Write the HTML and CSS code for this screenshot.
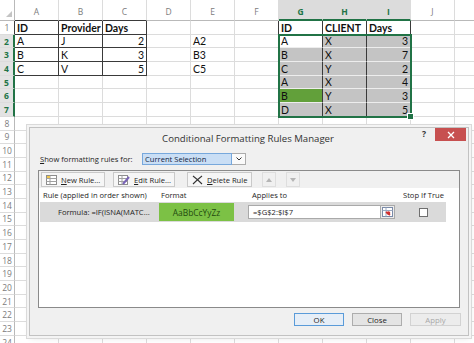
FILE: index.html
```html
<!DOCTYPE html>
<html>
  <head>
    <title>Conditional Formatting Rules Manager</title>
    <meta name="viewport" content="width=device-width">
    <link rel="stylesheet" href="styles.css">
  </head>
  <body>
    <div id="sheet" class="sheet">
      <div class="selbox"></div>
    </div>

    <div class="dlg">
      <div class="titlebar">
        <div class="title">Conditional Formatting Rules Manager</div>
        <div class="help">?</div>
        <div class="xbtn">
          <svg width="8" height="8" viewBox="0 0 8 8"><path d="M1 1L7 7M7 1L1 7" stroke="#fff" stroke-width="1.3"/></svg>
        </div>
      </div>

      <div class="showrow">
        <span class="lbl"><u>S</u>how formatting rules for:</span>
        <div class="combo">
          <span class="combo-val">Current Selection</span>
          <span class="combo-btn">
            <svg width="6" height="4" viewBox="0 0 6 4"><path d="M0.5 0.5L3 3L5.5 0.5" fill="none" stroke="#333" stroke-width="1"/></svg>
          </span>
        </div>
      </div>

      <div class="panel">
        <div class="toolbar">
          <div class="tbtn w-new">
            <svg width="11" height="10" viewBox="0 0 11 10">
              <rect x="0.5" y="0.5" width="10" height="9" fill="#fff" stroke="#8d8d8d"/>
              <path d="M0.5 3.5h10M0.5 6.5h10M4 0.5v9" stroke="#a0a0a0"/>
              <rect x="1" y="1" width="3" height="2" fill="#f0c850"/>
            </svg>
            <span><u>N</u>ew Rule...</span>
          </div>
          <div class="tbtn w-edit">
            <svg width="12" height="10" viewBox="0 0 12 10">
              <rect x="0.5" y="0.5" width="9" height="9" fill="#fff" stroke="#8d8d8d"/>
              <path d="M0.5 3.5h9M0.5 6.5h9M4 0.5v9" stroke="#a0a0a0"/>
              <path d="M5 9L11 2" stroke="#7a64b8" stroke-width="2"/>
            </svg>
            <span><u>E</u>dit Rule...</span>
          </div>
          <div class="tbtn w-del">
            <svg width="11" height="10" viewBox="0 0 11 10"><path d="M1 1Q5 4 10 9M10 1Q6 4 1 9" fill="none" stroke="#333" stroke-width="1.1"/></svg>
            <span><u>D</u>elete Rule</span>
          </div>
          <div class="tbtn w-arr">
            <svg width="6" height="4" viewBox="0 0 6 4"><path d="M0 4L3 0L6 4Z" fill="#b5b5b5"/></svg>
          </div>
          <div class="tbtn w-arr">
            <svg width="6" height="4" viewBox="0 0 6 4"><path d="M0 0L3 4L6 0Z" fill="#b5b5b5"/></svg>
          </div>
        </div>

        <div class="list">
          <div class="lhead">
            <span>Rule (applied in order shown)</span>
            <span>Format</span>
            <span class="ap">Applies to</span>
            <span class="st">Stop If True</span>
          </div>
          <div class="lrow">
            <span class="rule">Formula: =IF(ISNA(MATC...</span>
            <span class="fmt">AaBbCcYyZz</span>
            <span class="applies">
              <span class="inp">=$G$2:$I$7</span>
              <span class="pick">
                <svg width="11" height="10" viewBox="0 0 11 10">
                  <rect x="0.5" y="0.5" width="10" height="9" fill="#fff" stroke="#7a8aa8"/>
                  <path d="M0.5 3.5h10M4 0.5v9" stroke="#9aa8c0"/>
                  <path d="M4 5L8 8" stroke="#d03030" stroke-width="1.6"/>
                  <circle cx="6.5" cy="6" r="1.8" fill="#d03030"/>
                </svg>
              </span>
            </span>
            <span class="stop"><span class="chk"></span></span>
          </div>
        </div>
      </div>

      <div class="footer">
        <div class="fbtn ok">OK</div>
        <div class="fbtn">Close</div>
        <div class="fbtn off">Apply</div>
      </div>
    </div>

    <script src="script.js"></script>
  </body>
</html>
```

FILE: script.js
```js
// K is only partly in view, its letter falls outside the window
let cols = "ABCDEFGHIJ".split("").concat([""]);
let data = {
  A1: "ID", B1: "Provider", C1: "Days",
  A2: "A", B2: "J", C2: 2,
  A3: "B", B3: "K", C3: 3,
  A4: "C", B4: "V", C4: 5,
  E2: "A2", E3: "B3", E4: "C5",
  G1: "ID", H1: "CLIENT", I1: "Days",
  G2: "A", H2: "X", I2: 3,
  G3: "B", H3: "X", I3: 7,
  G4: "C", H4: "Y", I4: 2,
  G5: "A", H5: "X", I5: 4,
  G6: "B", H6: "Y", I6: 3,
  G7: "D", H7: "X", I7: 5
};
// bordered tables: [col from, row from, col to, row to]
let boxes = [[0, 1, 2, 4], [6, 1, 8, 7]];

let inBox = (c, r) => boxes.some(b => c >= b[0] && c <= b[2] && r >= b[1] && r <= b[3]);
let inSel = (c, r) => c >= 6 && c <= 8 && r >= 2 && r <= 7;

let sheet = document.getElementById("sheet");

for (let r = 0; r <= 24; r++) {
  for (let c = -1; c < cols.length; c++) {
    let el = document.createElement("div");
    el.style.gridArea = `${r + 1} / ${c + 2}`;
    if (r == 0 && c == -1) {
      el.className = "corner";
    } else if (r == 0) {
      el.className = "ch" + (c >= 6 && c <= 8 ? " on" : "") + (inBox(c, 1) ? " db" : "");
      el.textContent = cols[c];
    } else if (c == -1) {
      el.className = "rh" + (r >= 2 && r <= 7 ? " on" : "") + (inBox(0, r) ? " dr" : "");
      el.textContent = r;
    } else {
      let key = cols[c] + r;
      let val = data[key];
      let cls = ["c"];
      if (inBox(c, r) || inBox(c + 1, r)) cls.push("dr");
      if (inSel(c, r) && r < 7) cls.push("lb");
      else if (inBox(c, r) || inBox(c, r + 1)) cls.push("db");
      if (r == 1 && inBox(c, r)) cls.push("b");
      if (typeof val == "number") cls.push("num");
      if (key == "G6") cls.push("cf");
      else if (inSel(c, r) && key != "G2") cls.push("sel");
      el.className = cls.join(" ");
      if (val !== undefined) el.textContent = val;
    }
    sheet.appendChild(el);
  }
}
```

FILE: styles.css
```css
* { box-sizing: border-box; }
body {
  margin: 0;
  width: 474px;
  height: 343px;
  overflow: hidden;
  position: relative;
  background: #fff;
  font-family: Lato, "Liberation Sans", sans-serif;
}

/* spreadsheet */
.sheet {
  display: grid;
  grid-template-columns: 15px repeat(11, 44px);
  grid-template-rows: 21px repeat(24, 13.7px);
}

.c, .ch, .rh, .corner {
  border-right: 1px solid #dcdcdc;
  border-bottom: 1px solid #dcdcdc;
  white-space: nowrap;
  overflow: hidden;
  display: flex;
}

.c {
  font-size: 10.5px;
  line-height: 12px;
  padding: 0 2px;
  align-items: flex-end;
  color: #111;
}
.c.num { justify-content: flex-end; }
.c.b { font-weight: bold; }
.c.sel { background: #c4c4c4; }
.c.cf { background: #62a03a; }

.dr { border-right-color: #3a3a3a; }
.db { border-bottom-color: #3a3a3a; }
.lb { border-bottom-color: #ededed; }

.ch, .rh {
  font-family: "Open Sans", sans-serif;
  font-size: 8.5px;
  color: #7c7c7c;
  justify-content: center;
  align-items: center;
}
.ch { border-bottom-color: #b9b9b9; padding-top: 3px; }
.rh { border-right-color: #b9b9b9; }
.ch.db { border-bottom-color: #3a3a3a; }
.rh.dr { border-right-color: #3a3a3a; }

.ch.on {
  background: #dcdcdc;
  color: #217346;
  font-weight: bold;
  border-bottom: 2px solid #217346;
}
.rh.on {
  background: #e3e3e3;
  color: #217346;
  font-weight: bold;
  border-right: 2px solid #217346;
}

.corner {
  border-bottom-color: #b9b9b9;
  border-right-color: #b9b9b9;
  align-items: flex-end;
  justify-content: flex-end;
  padding: 0 2px 3px 0;
}
.corner::after {
  content: "";
  border-left: 6px solid transparent;
  border-bottom: 6px solid #c4c4c4;
}

.selbox {
  grid-area: 3 / 8 / 9 / 11;
  margin: -1px;
  border: 2px solid #217346;
  position: relative;
  z-index: 2;
  pointer-events: none;
}
.selbox::after {
  content: "";
  position: absolute;
  right: -4px;
  bottom: -4px;
  width: 5px;
  height: 5px;
  background: #217346;
  border: 1px solid #fff;
}

/* dialog */
.dlg {
  position: absolute;
  left: 29px;
  top: 127px;
  width: 440px;
  height: 209px;
  z-index: 5;
  background: #f0f0f0;
  border: 1px solid #c2c2c2;
  box-shadow: 0 0 0 2px #f4f4f4, 0 0 0 3px #dadada, 1px 2px 6px rgba(0,0,0,.12);
  font-family: "Open Sans", sans-serif;
  font-size: 7.6px;
  color: #1e1e1e;
  display: flex;
  flex-direction: column;
}

.titlebar {
  height: 22px;
  display: flex;
  align-items: flex-start;
  padding-right: 2px;
}
.title {
  flex: 1;
  text-align: center;
  font-size: 9.6px;
  color: #333;
  line-height: 22px;
  padding-left: 44px;
}
.help {
  flex: none;
  width: 12px;
  font-weight: bold;
  font-size: 8.5px;
  color: #333;
  line-height: 12px;
  margin-right: 1px;
}
.xbtn {
  flex: 0 0 31px;
  min-width: 31px;
  height: 13px;
  background: #c75050;
  display: flex;
  align-items: center;
  justify-content: center;
}

.showrow {
  display: flex;
  align-items: center;
  height: 14px;
  margin: 2px 0 0 10px;
}
.lbl { width: 102px; }
.combo {
  display: flex;
  height: 12px;
}
.combo-val {
  width: 90px;
  background: #c9def5;
  border: 1px solid #77a8dc;
  color: #10233d;
  padding-left: 2px;
  line-height: 10px;
}
.combo-btn {
  width: 14px;
  background: #fafafa;
  border: 1px solid #acacac;
  border-left: none;
  display: flex;
  align-items: center;
  justify-content: center;
}

.panel {
  margin: 4px 8px 0 8px;
  height: 138px;
  border: 1px solid #8a8a8a;
  display: flex;
  flex-direction: column;
}

.toolbar {
  height: 17px;
  display: flex;
  align-items: center;
  padding-left: 2px;
  background: #f0f0f0;
}
.tbtn {
  flex: none;
  height: 15px;
  display: flex;
  align-items: center;
  gap: 4px;
  padding-left: 4px;
  background: #f6f6f6;
  border: 1px solid #c9c9c9;
}
.w-new { width: 64px; }
.w-edit { width: 62px; margin-left: 8px; }
.w-del { width: 65px; margin-left: 12px; }
.w-arr {
  width: 14px;
  margin-left: 10px;
  padding: 0;
  justify-content: center;
  background: #f0f0f0;
  border-color: #dedede;
}

.list {
  flex: 1;
  background: #fff;
}
.lhead, .lrow {
  display: grid;
  grid-template-columns: 118px 89px 152px 47px;
}
.lhead {
  height: 13px;
  align-items: center;
  padding-left: 4px;
}
.lhead .ap { padding-left: 2px; }
.lhead .st { padding-left: 1px; }

.lrow {
  margin: 1px 0 0 1px;
  width: 406px;
  height: 20px;
  background: #dadada;
  align-items: center;
}
.rule { padding-left: 18px; }
.fmt {
  align-self: stretch;
  margin: 1px 13px 1px 1px;
  background: #7cc145;
  color: #234a10;
  font-size: 8.4px;
  display: flex;
  align-items: center;
  justify-content: center;
}
.applies {
  display: flex;
  height: 14px;
  margin-left: 1px;
}
.inp {
  width: 133px;
  background: #fff;
  border: 1px solid #a9a9a9;
  padding-left: 4px;
  line-height: 12px;
}
.pick {
  width: 14px;
  background: #ececec;
  border: 1px solid #a9a9a9;
  border-left: none;
  display: flex;
  align-items: center;
  justify-content: center;
}
.stop {
  display: flex;
  justify-content: flex-start;
  padding-left: 20px;
}
.chk {
  width: 9px;
  height: 9px;
  background: #fff;
  border: 1px solid #6f6f6f;
}

.footer {
  display: flex;
  justify-content: flex-end;
  gap: 8px;
  margin-top: 5px;
  padding-right: 7px;
}
.fbtn {
  width: 50px;
  height: 13px;
  border: 1px solid #adadad;
  background: #e4e4e4;
  display: flex;
  align-items: center;
  justify-content: center;
  font-size: 7.8px;
}
.fbtn.ok { border-color: #5a9bd9; background: #e6eef7; }
.fbtn.off { width: 51px; color: #a8a8a8; border-color: #d2d2d2; background: #ececec; }
```
